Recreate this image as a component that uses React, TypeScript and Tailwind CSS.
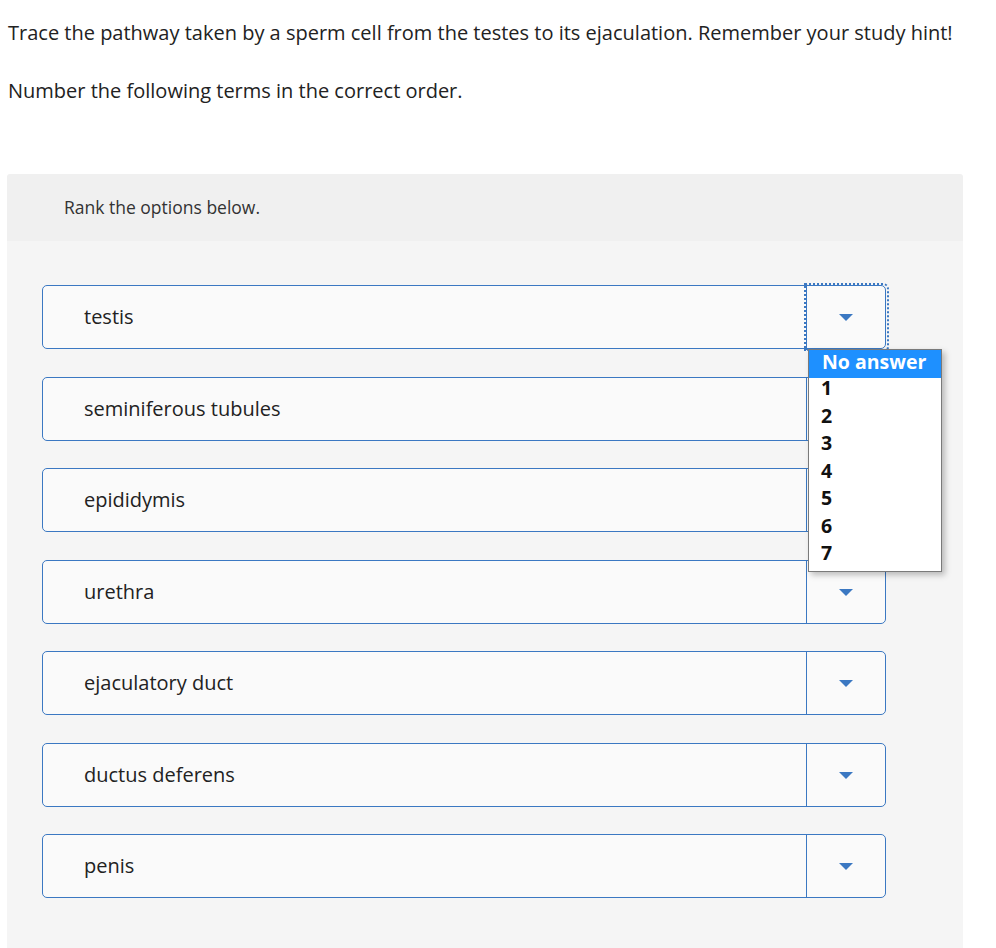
import React from "react";

const items = [
  "testis",
  "seminiferous tubules",
  "epididymis",
  "urethra",
  "ejaculatory duct",
  "ductus deferens",
  "penis",
];

function Arrow() {
  return (
    <svg width="16" height="8" viewBox="0 0 16 8" className="block">
      <polygon points="1,1 15,1 8,8" fill="#3b78c2" />
    </svg>
  );
}

export default function App() {
  return (
    <div
      className="min-h-[948px] bg-white text-[#222]"
      style={{ fontFamily: "'Open Sans', Lato, sans-serif" }}
    >
      <p className="pl-2 pt-[19px] text-[20px] leading-[28px]">
        Trace the pathway taken by a sperm cell from the testes to its ejaculation. Remember your study hint!
      </p>
      <p className="pl-2 mt-[30px] text-[20px] leading-[28px]">
        Number the following terms in the correct order.
      </p>
      <div className="ml-[7px] w-[956px] mt-[69px] rounded-t-[3px] overflow-visible">
        <div className="h-[67px] bg-[#f0f0f0] rounded-t-[3px] pl-[57px] flex items-center text-[17.5px] text-[#333]">
          Rank the options below.
        </div>
        <div className="bg-[#f5f5f5] pl-[35px] pt-[44px] pb-[60px] flex flex-col gap-[27.5px]">
          {items.map((t, i) => (
            <div
              key={t}
              className="relative w-[844px] h-[64px] flex border border-[#3b78c2] rounded-[5px] bg-[#fafafa]"
            >
              <div className="flex-1 flex items-center pl-[41px] text-[20px] text-[#222]">
                {t}
              </div>
              <div className="w-[79px] border-l border-[#3b78c2] flex items-center justify-center">
                <Arrow />
              </div>
              {i === 0 && (
                <>
                  <div className="absolute -top-[3px] left-[761px] w-[85px] h-[68px] border-2 border-dotted border-[#3b78c2] rounded-tr-[6px] rounded-br-[4px] pointer-events-none" />
                  <div className="absolute top-[63px] left-[765px] w-[134px] z-10 border border-[#7a7a7a] bg-white shadow-[3px_3px_6px_rgba(0,0,0,0.25)] font-bold text-[19.5px]">
                    <div className="bg-[#1e90ff] text-white pl-[13px] h-[28px] leading-[23px] whitespace-nowrap">No answer</div>
                    {[1, 2, 3, 4, 5, 6, 7].map((n) => (
                      <div key={n} className="pl-[12px] h-[27.5px] leading-[20px] text-[#111]">
                        {n}
                      </div>
                    ))}
                  </div>
                </>
              )}
            </div>
          ))}
        </div>
      </div>
    </div>
  );
}
